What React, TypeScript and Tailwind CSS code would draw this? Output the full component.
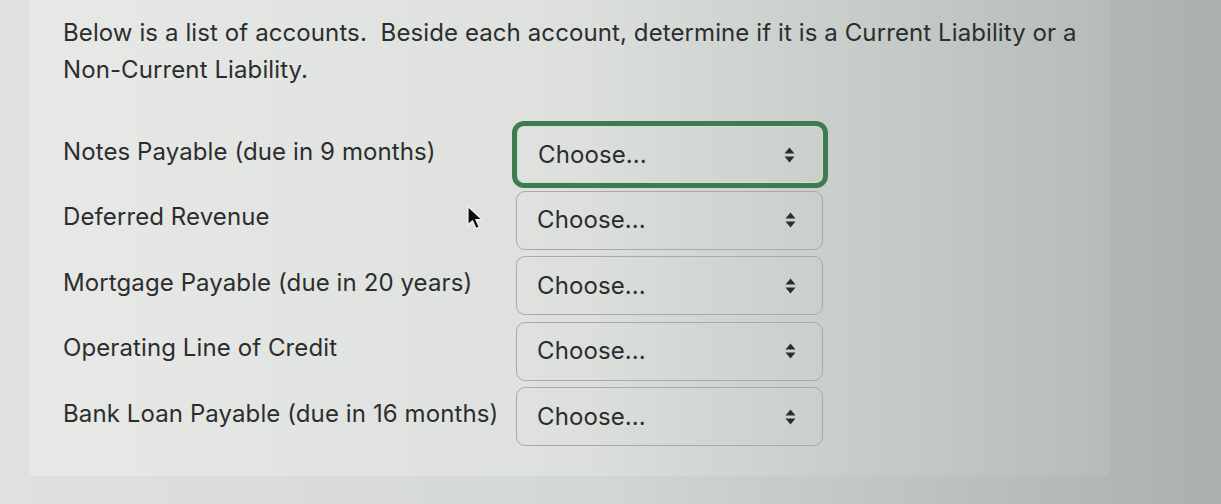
import React from 'react';

const rows = [
  'Notes Payable (due in 9 months)',
  'Deferred Revenue',
  'Mortgage Payable (due in 20 years)',
  'Operating Line of Credit',
  'Bank Loan Payable (due in 16 months)',
];

function Arrows() {
  return (
    <svg width="11" height="18" viewBox="0 0 11 18" className="text-[#2a2d2e]">
      <path d="M5.5 1.5 L10.5 7.5 H0.5 Z" fill="currentColor" />
      <path d="M5.5 16.5 L10.5 10.5 H0.5 Z" fill="currentColor" />
    </svg>
  );
}

function Choose({ focused }: { focused?: boolean }) {
  return (
    <div
      className={
        focused
          ? 'flex h-[67px] w-[316px] -ml-[4px] -my-[4px] items-center justify-between rounded-[12px] border-[5px] border-[#3f7b50] pl-[21px] pr-[28px] shadow-[inset_0_0_0_1px_#cfe3d3]'
          : 'flex h-[59px] w-[307px] items-center justify-between rounded-[9px] border-[1.5px] border-[#a7aaa8] pl-[20px] pr-[26px]'
      }
    >
      <span>Choose...</span>
      <Arrows />
    </div>
  );
}

export default function App() {
  return (
    <div
      className="relative h-[504px] w-[1221px] overflow-hidden bg-gradient-to-r from-[#dfe1de] via-[#d3d7d4] to-[#a9b0ad] text-[#2b2e2f]"
      style={{ fontFamily: 'Inter, "Liberation Sans", Arial, sans-serif' }}
    >
      <div className="ml-[29px] mr-[111px] h-[476px] rounded-b-[6px] bg-gradient-to-r from-[#e8e9e6] via-[#dde0dd] to-[#b5bcb9] pl-[34px] pt-[14px] text-[24px] tracking-[0.1px]">
        <p className="leading-[37px]">
          Below is a list of accounts.&nbsp; Beside each account, determine if it is a Current Liability or a
          <br />
          Non-Current Liability.
        </p>
        <div className="mt-[37px] grid grid-cols-[453px_auto] justify-start gap-y-[6.5px]">
          {rows.map((r, i) => (
            <React.Fragment key={r}>
              <div className="flex h-[59px] items-center whitespace-nowrap pb-[6px]">{r}</div>
              <Choose focused={i === 0} />
            </React.Fragment>
          ))}
        </div>
      </div>
      <svg
        className="absolute left-[466px] top-[205px]"
        width="20"
        height="26"
        viewBox="0 0 20 26"
      >
        <path
          d="M2 1.5 L2 20 L6.5 15.8 L10 23.5 L13.2 22.1 L9.8 14.6 L16 14.6 Z"
          fill="#0d0d0d"
          stroke="#f2f2f2"
          strokeWidth="1.2"
          strokeLinejoin="round"
        />
      </svg>
    </div>
  );
}
